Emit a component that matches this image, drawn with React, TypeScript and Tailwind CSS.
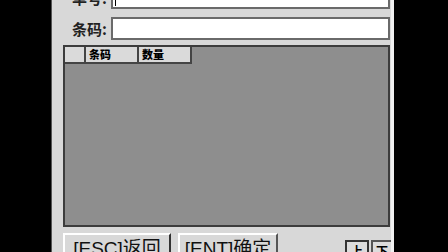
import React from "react";

export default function App() {
  const cjk = { fontFamily: '"Noto Sans CJK SC", "Liberation Sans", sans-serif' };
  const btnFont = { fontFamily: '"Liberation Sans", "Noto Sans CJK SC", sans-serif' };
  return (
    <div className="w-[448px] h-[252px] bg-black flex overflow-hidden" style={cjk}>
      <div className="w-[52px] shrink-0 border-r border-[#555]" />
      <div className="w-[342px] shrink-0 h-full bg-[#d8d8d8] border-r-[3px] border-[#f0f0f0] flex flex-col overflow-hidden">
        <div className="flex items-center mt-[-14px] h-[23px] shrink-0">
          <div className="w-[59px] pr-[4px] text-right text-[15px] font-bold text-[#222] leading-none">单号:</div>
          <div className="w-[279px] h-full bg-white border-2 border-[#6a6a6a] border-t-[#555] flex items-end">
            <div className="w-px h-[8px] bg-black ml-[2px] mb-[1px]" />
          </div>
        </div>
        <div className="flex items-center mt-[8px] h-[23px] shrink-0">
          <div className="w-[59px] pr-[4px] text-right text-[15px] font-bold text-[#222] leading-none">条码:</div>
          <div className="w-[279px] h-full bg-white border-2 border-[#6a6a6a]" />
        </div>
        <div className="ml-[11px] mt-[5px] w-[327px] h-[182px] shrink-0 bg-[#8e8e8e] border-2 border-[#3c3c3c] flex flex-col">
          <div className="flex h-[17px]">
            <div className="w-[21px] bg-[#dadada] border-r-2 border-b-2 border-[#444]" />
            <div className="w-[53px] bg-[#dadada] border-r-2 border-b-2 border-[#444] text-[11px] font-black text-black leading-[15px] pl-[3px]">条码</div>
            <div className="w-[53px] bg-[#dadada] border-r-2 border-b-2 border-[#444] text-[11px] font-black text-black leading-[15px] pl-[3px]">数量</div>
          </div>
        </div>
        <div className="flex mt-[6px] ml-[11px] h-[30px] shrink-0">
          <div className="w-[108px] h-full bg-[#d8d8d8] border-t-2 border-l-2 border-t-white border-l-white border-r-2 border-r-[#333] flex justify-center pt-[2px]">
            <span className="text-[19px] text-[#111] leading-[24px]" style={btnFont}>[ESC]返回</span>
          </div>
          <div className="w-[100px] h-full ml-[7px] bg-[#d8d8d8] border-t-2 border-l-2 border-t-white border-l-white border-r-2 border-r-[#555] flex justify-center pt-[2px]">
            <span className="text-[19px] text-[#111] leading-[24px]" style={btnFont}>[ENT]确定</span>
          </div>
          <div className="flex-1" />
          <div className="flex mt-[7px] gap-[2px] mr-[-2px]">
            <div className="w-[24px] h-[20px] border-2 border-[#333] bg-[#dcdcdc] flex justify-center pt-[3px] text-[12px] font-bold leading-none">上</div>
            <div className="w-[22px] h-[20px] border-2 border-[#555] bg-[#dcdcdc] flex justify-center pt-[3px] text-[12px] font-bold leading-none">下</div>
          </div>
        </div>
      </div>
      <div className="flex-1" />
    </div>
  );
}
